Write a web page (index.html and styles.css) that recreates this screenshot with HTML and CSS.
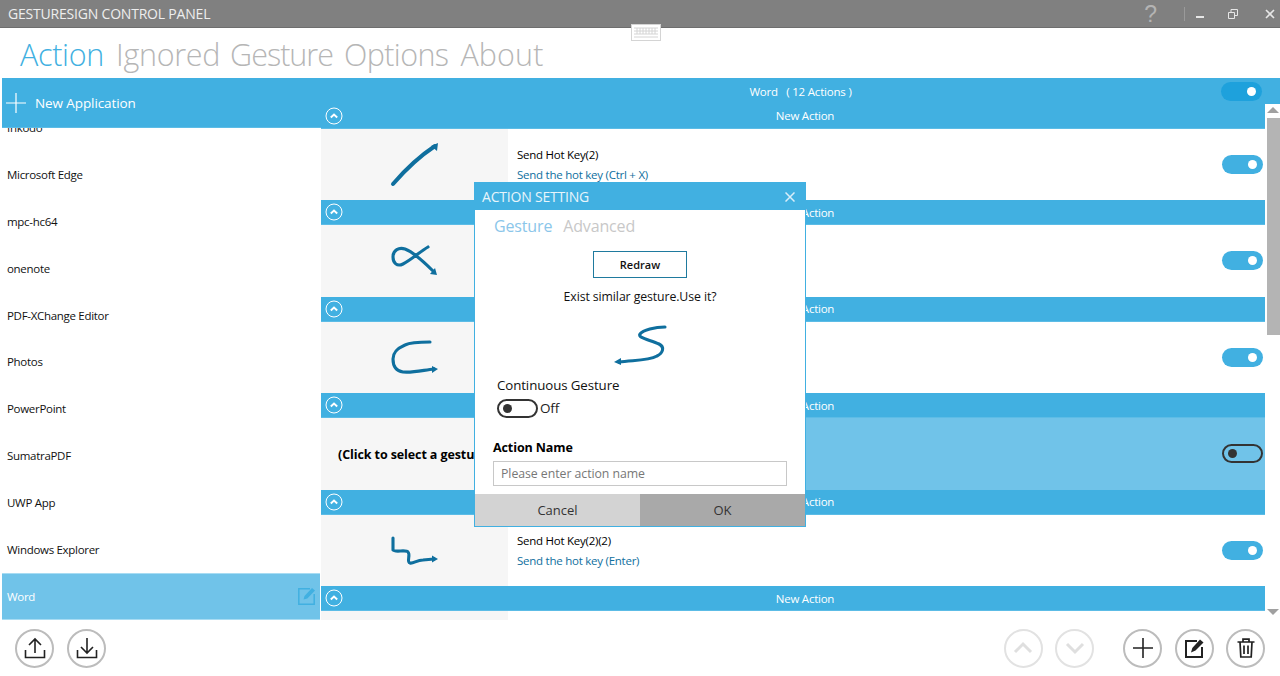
FILE: index.html
```html
<!DOCTYPE html>
<html lang="en">
<head>
<meta charset="utf-8">
<title>GestureSign Control Panel</title>
<link rel="stylesheet" href="styles.css">
</head>
<body>
<svg class="defs" width="0" height="0">
  <defs>
    <symbol id="chev" viewBox="0 0 18 18"><circle cx="9" cy="9" r="8" fill="none" stroke="#fff" stroke-width="1"/><path d="M5.800 10.400 9 7.600l3.200 2.800" fill="none" stroke="#fff" stroke-width="2"/></symbol>
    <symbol id="pen" viewBox="0 0 18 18"><path d="M12 1.800H.8v15.400h15.400V7" fill="none" stroke="currentColor" stroke-width="1.500"/><path d="M5.500 12.500l1-3.500 7.500-8 3 2.600-7.700 8z" fill="currentColor"/></symbol>
  </defs>
</svg>
<header class="titlebar">
  <span class="app-title">GESTURESIGN CONTROL PANEL</span>
  <div class="win-controls">
    <span class="help">?</span>
    <span class="divider"></span>
    <svg class="win-icon win-min" width="10" height="10" viewBox="0 0 10 10"><path d="M1 8h8" stroke="#e6e6e6" stroke-width="2"/></svg>
    <svg class="win-icon win-max" width="10" height="10" viewBox="0 0 10 10"><path d="M.5 3.500h6v6h-6zM3 3.500V.5h6.500v6H6.500" fill="none" stroke="#e6e6e6"/></svg>
    <svg class="win-icon" width="10" height="10" viewBox="0 0 10 10"><path d="M1 1l8 8M9 1L1 9" stroke="#e6e6e6" stroke-width="1.600"/></svg>
  </div>
</header>
<svg class="keyboard" width="30" height="18" viewBox="0 0 30 18"><rect x=".5" y=".5" width="29" height="16" fill="#fff" stroke="#d4d4d4"/><path d="M3 4h24M3 7h24M3 10h24M3 13h24M6 4v6M9 4v6M12 4v6M15 4v6M18 4v6M21 4v6M24 4v6" stroke="#d4d4d4"/></svg>
<nav class="tabs">
  <a class="tab tab-active">Action</a>
  <a class="tab">Ignored</a>
  <a class="tab tab-gesture">Gesture</a>
  <a class="tab tab-options">Options</a>
  <a class="tab tab-about">About</a>
</nav>
<main class="main">
  <section class="apps">
    <div class="new-app">
      <svg width="20" height="20" viewBox="0 0 20 20"><path d="M10 0v20M0 10h20" stroke="#fff" stroke-width="1.200"/></svg>
      <span>New Application</span>
    </div>
    <ul class="app-list">
      <li class="app app-clipped">Inkodo</li>
      <li class="app">Microsoft Edge</li>
      <li class="app">mpc-hc64</li>
      <li class="app">onenote</li>
      <li class="app">PDF-XChange Editor</li>
      <li class="app">Photos</li>
      <li class="app">PowerPoint</li>
      <li class="app">SumatraPDF</li>
      <li class="app">UWP App</li>
      <li class="app">Windows Explorer</li>
      <li class="app app-selected">Word<svg class="app-edit" width="18" height="18"><use href="#pen"/></svg></li>
    </ul>
  </section>
  <section class="actions">
    <div class="actions-head">
      <span></span>
      <span class="actions-title">Word &nbsp; ( 12 Actions )</span>
      <span class="switch switch-on switch-head"></span>
    </div>
    <div class="actions-body">
      <div class="rows">
        <article class="row row-first">
          <div class="row-head"><svg class="chev" width="18" height="18"><use href="#chev"/></svg><span>New Action</span></div>
          <div class="row-body">
            <div class="thumb"><svg class="stroke" width="187" height="71" viewBox="0 0 187 71"><path class="thick" d="M72 55C84 41 96 29 114 17"/><path class="head" d="M117 14l-1 8-6-5z"/></svg></div>
            <div class="row-text"><p class="name">Send Hot Key(2)</p><p class="desc">Send the hot key (Ctrl + X)</p></div>
            <span class="switch switch-on"></span>
          </div>
        </article>
        <article class="row">
          <div class="row-head"><svg class="chev" width="18" height="18"><use href="#chev"/></svg><span>New Action</span></div>
          <div class="row-body">
            <div class="thumb"><svg class="stroke" width="187" height="71" viewBox="0 0 187 71"><path d="M107 22C100 26 90 35 82 39 76 42 72 38 72 32 72 25 78 22 84 24 92 27 102 36 112 46"/><path class="head" d="M116 50l-7-1 5-6z"/></svg></div>
            <div class="row-text"><p class="name">Send Hot Key(2)</p><p class="desc">Send the hot key</p></div>
            <span class="switch switch-on"></span>
          </div>
        </article>
        <article class="row">
          <div class="row-head"><svg class="chev" width="18" height="18"><use href="#chev"/></svg><span>New Action</span></div>
          <div class="row-body">
            <div class="thumb"><svg class="stroke" width="187" height="71" viewBox="0 0 187 71"><path d="M109 20C100 20 90 20 84 23 75 27 72 31 72 37 72 45 75 49 82 50 92 51 103 48 113 47"/><path class="head" d="M117 47l-6 4v-7z"/></svg></div>
            <div class="row-text"><p class="name">Send Hot Key(2)</p><p class="desc">Send the hot key</p></div>
            <span class="switch switch-on"></span>
          </div>
        </article>
        <article class="row row-selected">
          <div class="row-head"><svg class="chev" width="18" height="18"><use href="#chev"/></svg><span>New Action</span></div>
          <div class="row-body">
            <div class="thumb thumb-text">(Click to select a gesture)</div>
            <div class="row-text"></div>
            <span class="switch switch-off"></span>
          </div>
        </article>
        <article class="row">
          <div class="row-head"><svg class="chev" width="18" height="18"><use href="#chev"/></svg><span>New Action</span></div>
          <div class="row-body">
            <div class="thumb"><svg class="stroke" width="187" height="71" viewBox="0 0 187 71"><path d="M72 23V35C74 38 85 34 87 37 90 40 85 47 89 48 92 49 96 45 102 45L113 44"/><path class="head" d="M117 44l-6 3.500v-7z"/></svg></div>
            <div class="row-text"><p class="name">Send Hot Key(2)(2)</p><p class="desc">Send the hot key (Enter)</p></div>
            <span class="switch switch-on"></span>
          </div>
        </article>
        <article class="row">
          <div class="row-head"><svg class="chev" width="18" height="18"><use href="#chev"/></svg><span>New Action</span></div>
          <div class="row-body"><div class="thumb"></div></div>
        </article>
      </div>
      <div class="scrollbar">
        <svg class="arrow" width="12" height="6" viewBox="0 0 12 6"><path d="M6 0l6 6H0z" fill="#a0a0a0"/></svg>
        <div class="scroll-thumb"></div>
        <svg class="arrow arrow-down" width="12" height="6" viewBox="0 0 12 6"><path d="M6 6l6-6H0z" fill="#a0a0a0"/></svg>
      </div>
    </div>
  </section>
</main>
<footer class="footer">
  <div class="btn-group">
    <button class="round"><svg width="24" height="24" viewBox="0 0 24 24" class="ic"><path d="M12 17V3M6 9l6-6 6 6M2.500 14v7.500h19V14"/></svg></button>
    <button class="round"><svg width="24" height="24" viewBox="0 0 24 24" class="ic"><path d="M12 2v15M6 11l6 6 6-6M2.500 14v7.500h19V14"/></svg></button>
  </div>
  <div class="btn-group btn-right">
    <button class="round round-off"><svg width="24" height="24" viewBox="0 0 24 24" class="ic ic-off"><path d="M4 16l8-8 8 8"/></svg></button>
    <button class="round round-off round-gap"><svg width="24" height="24" viewBox="0 0 24 24" class="ic ic-off"><path d="M4 8l8 8 8-8"/></svg></button>
    <button class="round"><svg width="24" height="24" viewBox="0 0 24 24" class="ic"><path d="M12 2v20M2 12h20"/></svg></button>
    <button class="round"><svg width="24" height="24" viewBox="0 0 24 24" class="ic"><path class="ic-bold" d="M15 5H4v16h16V11"/><path class="solid" d="M9 16.500l1.300-4.500L18 3.500l3.500 3-8 8z"/></svg></button>
    <button class="round"><svg width="24" height="24" viewBox="0 0 24 24" class="ic"><path class="ic-mid" d="M3.500 6h17M9 6V3.200h6V6M6 6l.8 15h10.400L18 6M10 9.500v8.500M14 9.500v8.500"/></svg></button>
  </div>
</footer>
<aside class="dialog">
  <div class="dialog-title"><span>ACTION SETTING</span>
    <svg width="10" height="10" viewBox="0 0 10 10"><path d="M.5.500l9 9M9.500.500l-9 9" stroke="#d9eef9" stroke-width="1.500"/></svg>
  </div>
  <div class="dialog-tabs"><span class="dtab-on">Gesture</span><span class="dtab-off">Advanced</span></div>
  <button class="redraw">Redraw</button>
  <p class="similar">Exist similar gesture.Use it?</p>
  <svg class="dialog-gesture stroke" width="60" height="40" viewBox="0 0 60 40"><path d="M52 2C42 2 30 5 27 9 24 13 38 15 46 19 52 22 50 28 44 31 35 36 20 35 6 37"/><path class="head" d="M1 37l7-4v7z"/></svg>
  <p class="cont-label">Continuous Gesture</p>
  <div class="cont-row"><span class="switch-dark"></span><span>Off</span></div>
  <label class="name-label">Action Name</label>
  <input class="name-input" placeholder="Please enter action name">
  <div class="dialog-foot"><button class="cancel">Cancel</button><button class="ok">OK</button></div>
</aside>
</body>
</html>
```
FILE: styles.css
```css
* { box-sizing: border-box; }
html, body { margin: 0; padding: 0; }
body {
  width: 1280px;
  height: 676px;
  overflow: hidden;
  display: flex;
  flex-direction: column;
  background: #fff;
  font-family: "Open Sans", "Noto Sans", sans-serif;
  color: #000;
  position: relative;
}
.defs { position: absolute; }
p { margin: 0; }

.titlebar {
  height: 28px;
  flex: none;
  background: #808080;
  border-bottom: 1px solid #6e6e6e;
  display: flex;
  align-items: center;
  justify-content: space-between;
  padding: 0 5px 0 8px;
  color: #eee;
}
.app-title { font-size: 14px; letter-spacing: -.2px; }
.win-controls { display: flex; align-items: center; }
.help { font: 23px/26px "Liberation Sans", sans-serif; color: #b4b4b4; margin-right: 27px; }
.divider { width: 1px; height: 14px; background: #9a9a9a; margin-right: 10px; }
.win-min { margin-right: 23px; }
.win-max { margin-right: 27px; }

.keyboard { position: absolute; left: 631px; top: 24px; }

.tabs {
  height: 50px;
  flex: none;
  display: flex;
  align-items: center;
  gap: 12px;
  padding: 2px 0 0 20px;
  font-size: 30.500px;
  font-weight: 300;
  letter-spacing: -.3px;
}
.tab { color: #b6b6b6; }
.tab-active { color: #41b0e1; }
.tab-gesture { letter-spacing: -1px; margin-left: -2px; }
.tab-options { letter-spacing: -.6px; margin-left: -1px; }
.tab-about { letter-spacing: .1px; }

.main {
  flex: 1;
  min-height: 0;
  display: flex;
  padding-left: 2px;
}
.apps {
  width: 319px;
  flex: none;
  display: flex;
  flex-direction: column;
  overflow: hidden;
}
.new-app {
  height: 50px;
  flex: none;
  background: #41b0e1;
  color: #fff;
  display: flex;
  align-items: center;
  gap: 9px;
  padding-left: 4px;
  font-size: 13.500px;
  letter-spacing: -.1px;
  position: relative;
  z-index: 1;
  border-bottom: 1px solid #5cbce6;
}
.app-list { list-style: none; margin: -24px 0 0; padding: 0; width: 318px; }
.app {
  height: 46.900px;
  display: flex;
  align-items: center;
  justify-content: space-between;
  padding: 0 5px;
  font-size: 11.500px;
  letter-spacing: -.3px;
  color: #111;
}
.app-selected { background: #70c3e9; color: #fff; border: 1px solid #a8dcf3; border-width: 1px 0; padding-right: 4px; }
.app-edit { color: #41b0e1; }

.actions { flex: 1; min-width: 0; display: flex; flex-direction: column; }
.actions-head {
  height: 26px;
  flex: none;
  background: #41b0e1;
  color: #fff;
  display: grid;
  grid-template-columns: 1fr auto 1fr;
  align-items: center;
  font-size: 11.500px;
  letter-spacing: -.2px;
}
.switch-head { justify-self: end; margin-right: 18px; background: #1ea1dc !important; }
.actions-body { flex: 1; min-height: 0; display: flex; }
.rows { flex: 1; min-width: 0; overflow: hidden; }
.row { height: 96.500px; display: flex; flex-direction: column; }
.row-first { margin-top: -.5px; }
.row-head {
  height: 25px;
  flex: none;
  background: #41b0e1;
  border-bottom: 1px solid #5cbce6;
  color: #fff;
  display: flex;
  align-items: center;
  font-size: 11.500px;
  letter-spacing: -.25px;
  padding-left: 4px;
}
.row-head span { flex: 1; text-align: center; transform: translateX(1px); }
.chev { flex: none; }
.row-body { flex: 1; display: flex; align-items: center; min-height: 0; }
.row-selected .row-body { background: #70c3e9; }
.thumb { width: 187px; height: 100%; flex: none; background: #f6f6f6; }
.thumb-text { display: flex; align-items: center; padding: 1px 0 0 17px; font-size: 12.500px; font-weight: 700; white-space: nowrap; letter-spacing: -.1px; }
.stroke { display: block; }
.stroke path { fill: none; stroke: #0f6f9e; stroke-width: 3.100; stroke-linecap: round; }
.stroke path.thick { stroke-width: 4; }
.stroke path.head { fill: #0f6f9e; stroke: none; }
.row-text { flex: 1; padding: 2px 0 0 9px; font-size: 11.500px; letter-spacing: -.25px; line-height: 20px; }
.desc { color: #0f6f9e; }

.switch { width: 41px; height: 19px; border-radius: 10px; position: relative; flex: none; display: block; }
.row .switch { margin-right: 2px; }
.switch::after { content: ""; position: absolute; top: 5px; width: 9px; height: 9px; border-radius: 50%; }
.switch-on { background: #41b0e1; }
.switch-on::after { right: 6px; background: #fff; }
.switch-off { background: transparent; border: 2px solid #333; }
.switch-off::after { left: 4px; top: 3px; background: #333; }

.scrollbar { width: 15px; flex: none; display: flex; flex-direction: column; align-items: center; background: #fff; padding: 3px 0 5px 1px; }
.arrow { flex: none; margin-bottom: 5px; }
.arrow-down { margin: auto 0 0; }
.scroll-thumb { width: 13px; height: 217px; background: #b4b4b4; flex: none; }

.footer {
  height: 56px;
  flex: none;
  display: flex;
  justify-content: space-between;
  align-items: center;
  padding: 0 15px;
}
.btn-group { display: flex; gap: 13px; }
.btn-right { gap: 12.500px; }
.round {
  width: 39px; height: 39px; border-radius: 50%;
  border: 2px solid #bcbcbc;
  background: #fff;
  padding: 0;
  display: flex; align-items: center; justify-content: center;
}
.round-off { border-color: #e2e2e2; }
.round-gap { margin-right: 16.500px; }
.ic { fill: none; stroke: #222; stroke-width: 1.600; }
.ic .solid { fill: #222; stroke: none; }
.ic .ic-bold { stroke-width: 2; }
.ic .ic-mid { stroke-width: 1.700; }
.ic-off { stroke: #dfdfdf; stroke-width: 3; }

.dialog {
  position: absolute;
  left: 474px; top: 182px;
  width: 332px; height: 345px;
  background: #fff;
  border: 1px solid #41b0e1;
  display: flex;
  flex-direction: column;
  align-items: flex-start;
}
.dialog-title {
  width: 100%; height: 27px; flex: none;
  background: #41b0e1; color: #e8f5fb;
  display: flex; align-items: center; justify-content: space-between;
  padding: 0 10px 0 7px;
  font-size: 14px; letter-spacing: -.2px;
}
.dialog-tabs { display: flex; gap: 11px; margin: 5px 0 0 19px; font-size: 16px; letter-spacing: -.15px; height: 22px; line-height: 22px; }
.dtab-on { color: #8bc6ea; }
.dtab-off { color: #c8c8c8; }
.redraw {
  width: 94px; height: 27px; margin: 14px 0 0 118px;
  background: #fff; border: 1px solid #1f7a9e; padding: 0;
  font: 600 11px "Open Sans", sans-serif; color: #111;
}
.similar { width: 100%; text-align: center; font-size: 12.300px; letter-spacing: -.1px; margin-top: 11px; line-height: 16px; color: #111; }
.dialog-gesture { margin: 20px 0 0 138px; }
.cont-label { margin: 11px 0 0 22px; font-size: 13.300px; letter-spacing: -.1px; line-height: 18px; color: #111; }
.cont-row { display: flex; align-items: center; gap: 2px; margin: 4px 0 0 22px; font-size: 13.500px; letter-spacing: -.2px; color: #222; height: 20px; }
.switch-dark { width: 41px; height: 19px; border: 2px solid #333; border-radius: 10px; position: relative; display: block; }
.switch-dark::after { content: ""; position: absolute; left: 4px; top: 3px; width: 9px; height: 9px; border-radius: 50%; background: #333; }
.name-label { margin: 21px 0 0 18px; font-size: 12.500px; font-weight: 700; line-height: 18px; letter-spacing: -.1px; }
.name-input {
  width: 294px; height: 25px; margin: 4px 0 0 18px;
  border: 1px solid #c8c8c8; padding: 0 7px; font: 12.300px "Open Sans", sans-serif; letter-spacing: -.05px; color: #333;
}
.name-input::placeholder { color: #777; opacity: 1; }
.dialog-foot { width: 100%; height: 32px; margin-top: auto; display: flex; }
.cancel, .ok { flex: 1; border: 0; padding: 0; font: 13px "Open Sans", sans-serif; color: #333; }
.cancel { background: #d3d3d3; }
.ok { background: #a9a9a9; }
```
